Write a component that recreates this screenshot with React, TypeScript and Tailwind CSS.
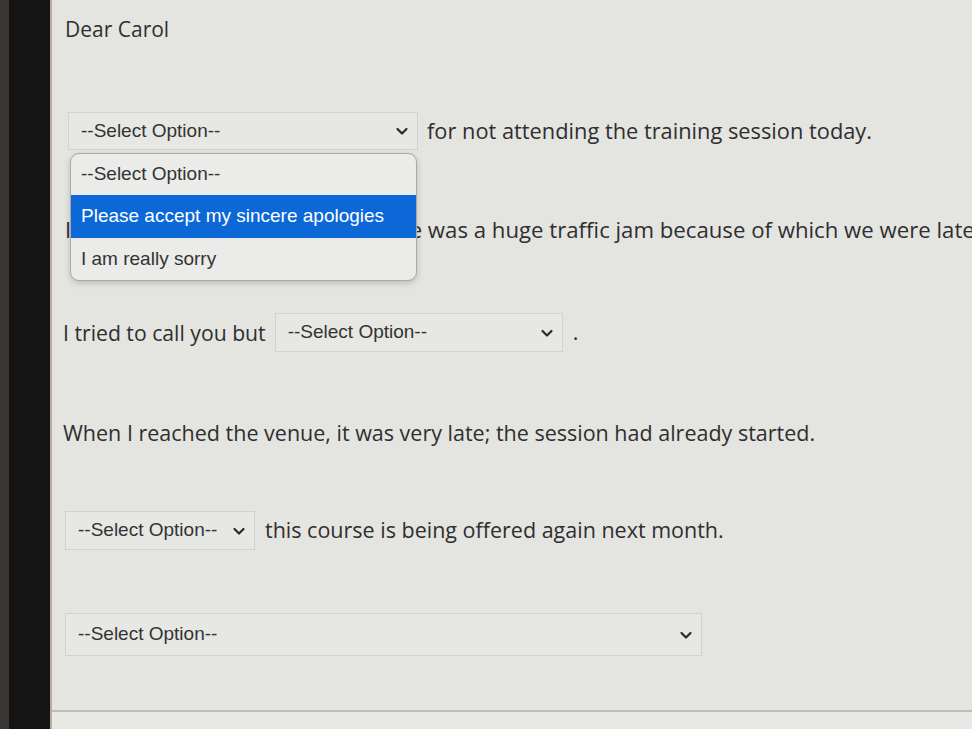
import React from 'react';

const BODY = '"Open Sans", "Noto Sans", sans-serif';
const SELECT_FONT = '"Liberation Sans", Arial, sans-serif';

function Chevron() {
  return (
    <svg width="14" height="10" viewBox="0 0 14 10" fill="none" className="shrink-0">
      <polyline points="2.5,3 7,7.5 11.5,3" stroke="#2a2a2a" strokeWidth="2.2" strokeLinecap="round" strokeLinejoin="round" />
    </svg>
  );
}

function FakeSelect({ className }: { className: string }) {
  return (
    <div
      className={`flex items-center justify-between border border-[#d2d2cf] bg-[#e7e7e4] pl-[12px] pr-[8px] text-[19px] text-[#333] ${className}`}
      style={{ fontFamily: SELECT_FONT }}
    >
      <span>--Select Option--</span>
      <Chevron />
    </div>
  );
}

export default function App() {
  return (
    <div className="flex h-[729px] w-[972px] overflow-hidden bg-[#e4e4e1]" style={{ fontFamily: BODY }}>
      {/* monitor bezel */}
      <div className="flex w-[52px] shrink-0">
        <div className="w-[9px] bg-[#3a3634]" />
        <div className="w-[41px] bg-[#141414]" />
        <div className="w-[2px] bg-[#b9ada0]" />
      </div>

      <div className="flex min-w-0 flex-1 flex-col text-[21.5px] text-[#2f2f2f]">
        <div className="mt-[11px] flex h-[38px] items-center pl-[13px] text-[21px]">Dear Carol</div>

        <div className="relative mt-[63px] flex h-[38px] items-center pl-[16px]">
          <FakeSelect className="h-[38px] w-[350px]" />
          <span className="ml-[9px] whitespace-nowrap text-[21.8px]">for not attending the training session today.</span>

          <div
            className="absolute left-[18px] top-[41px] z-10 w-[347px] overflow-hidden rounded-[9px] border-[1.5px] border-[#a9a9a7] bg-[#ebebe9] shadow-[0_2px_6px_rgba(0,0,0,0.18)] text-[19px]"
            style={{ fontFamily: SELECT_FONT }}
          >
            <div className="flex h-[41px] items-center pl-[10px] text-[#333]">--Select Option--</div>
            <div className="flex h-[43px] items-center bg-[#0c68d6] pl-[10px] text-white">Please accept my sincere apologies</div>
            <div className="flex h-[42px] items-center pl-[10px] text-[#333]">I am really sorry</div>
          </div>
        </div>

        <div className="mt-[61px] flex h-[38px] items-center whitespace-nowrap pl-[13px] text-[22.2px]">
          I left on time, but on the way there was a huge traffic jam because of which we were late
        </div>

        <div className="mt-[64px] flex h-[39px] items-center pl-[11px]">
          <span className="whitespace-nowrap text-[21.2px]">I tried to call you but</span>
          <FakeSelect className="ml-[9px] h-[39px] w-[288px]" />
          <span className="ml-[10px]">.</span>
        </div>

        <div className="mt-[62px] flex h-[38px] items-center whitespace-nowrap pl-[11px]">
          When I reached the venue, it was very late; the session had already started.
        </div>

        <div className="mt-[59px] flex h-[39px] items-center pl-[13px]">
          <FakeSelect className="h-[39px] w-[190px]" />
          <span className="ml-[10px] whitespace-nowrap">this course is being offered again next month.</span>
        </div>

        <div className="mt-[63px] flex h-[43px] items-center pl-[13px]">
          <FakeSelect className="h-[43px] w-[637px]" />
        </div>

        <div className="mt-[54px] h-[2px] w-full bg-[#bdbdba]" />
        <div className="flex-1 bg-[#e8e8e5]" />
      </div>
    </div>
  );
}
